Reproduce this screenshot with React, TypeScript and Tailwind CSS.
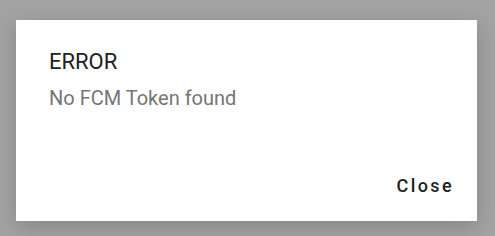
import React from "react";

export default function App() {
  return (
    <div className="w-[495px] h-[236px] bg-[#a3a3a3] pt-[20px] pl-[16px]" style={{ fontFamily: "Roboto, 'Liberation Sans', sans-serif" }}>
      <div className="w-[461px] h-[201px] bg-white flex flex-col shadow-[0_6px_20px_rgba(0,0,0,0.18)]">
        <div className="pt-[29px] pl-[33px] text-[22px] leading-[26px] text-[#212121]">ERROR</div>
        <div className="mt-[11px] pl-[33px] text-[20px] leading-[24px] text-[#757575]">No FCM Token found</div>
        <div className="mt-auto flex justify-end pr-[23px] pb-[23px]">
          <button className="text-[18px] leading-[24px] font-medium tracking-[2.4px] text-[#212121]">Close</button>
        </div>
      </div>
    </div>
  );
}
